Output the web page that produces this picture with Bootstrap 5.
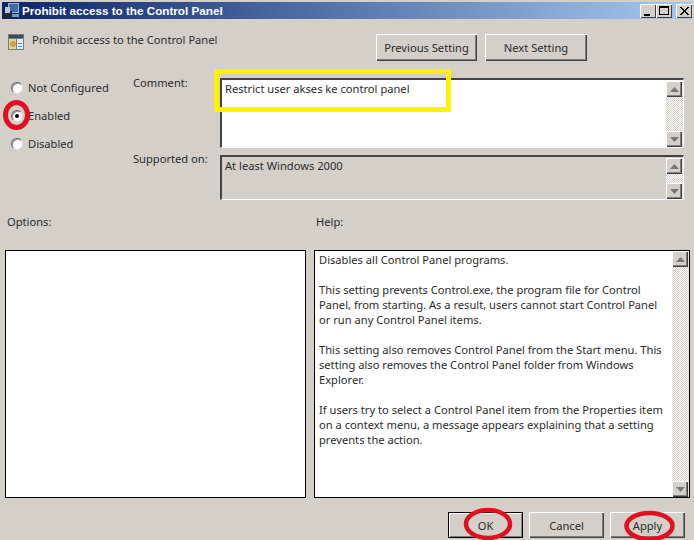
<!DOCTYPE html>
<html lang="en"><head><meta charset="utf-8"><title>Prohibit access to the Control Panel</title>
<link href="https://cdn.jsdelivr.net/npm/bootstrap@5.3.0/dist/css/bootstrap.min.css" rel="stylesheet">
<style>
html,body{height:100%}
body{margin:0;background:#d4d0c8;color:#2a2a2a;font:11.15px/13px "Noto Sans","Open Sans",sans-serif;overflow:hidden}
.dlg{position:relative;width:694px;height:540px;overflow:hidden}
.ttl{height:17px;margin:2px 2px 0 2px;padding:0;background:linear-gradient(90deg,#0a246a,#a6caf0);color:#fff;font:bold 11.7px/17px "Liberation Sans",sans-serif}
.ttl>svg{margin:0 2px}
.wbtn{width:16px;height:14px;background:#d4d0c8;box-shadow:inset 1px 1px #fff,inset -1px -1px #404040;color:#000}
.wbtn svg{display:block}
.wbtn-gap{margin-right:2px}
.hdr{padding:15px 107px 0 8px;height:59px}
.hdr-t{margin:-1px 0 0 8px}
.w98{background:#d4d0c8;border:0;padding:0;color:#2a2a2a;font:inherit;box-shadow:inset 1px 1px #fff,inset -1px -1px #404040,inset -2px -2px #808080}
.nav-b{width:102px;height:27px}
.nav-b.first-b{width:101px}
.top{height:122px}
.radios{width:133px;padding:0 0 0 11px;margin-top:-5px}
.rad{height:28px;gap:5px}
.rdo{width:12px;height:12px;border-radius:50%;background:#fff;border:1px solid;border-color:#666 #ddd #ddd #666;box-shadow:inset 1px 1px #999;flex:none;display:flex;align-items:center;justify-content:center}
.rdo i{display:block;width:4px;height:4px;border-radius:50%;background:#000}
.rad span{margin-top:1px}
.lbls{width:87px}
.l1{height:76px;margin-top:-2px}
.l2{height:40px}
.sunk{border:1px solid;border-color:#444 #fff #fff #444;border-top-width:2px;border-left-width:2px;padding:2px 0 0 3px}
.cmt{width:464px;height:70px;background:#fff}
.sup{width:464px;height:45px;margin-top:7px}
.sb{width:17px;background:repeating-conic-gradient(#d4d0c8 0 25%,#fff 0 50%) 0 0/2px 2px;flex:none;margin-top:-1px}
.ab{width:16px;height:16px;background:#d4d0c8;box-shadow:inset 1px 1px #fff,inset -1px -1px #404040,inset -2px -2px #808080;display:flex;align-items:center;justify-content:center}
.body-txt{flex:1;min-width:0}
.opt-lbl{height:50px;padding:15px 0 0 7px}
.opt-lbl span:first-child{width:309px}
.panes{height:248px;padding-left:5px;gap:8px}
.pane{background:#fff;border:1px solid #000;height:248px}
.p1{width:301px}
.p2{width:376px;padding:1px 0 0 4px}
.p2 p{margin:0 0 15px;line-height:15px;width:352px}
.foot{padding:14px 0 0 448px;gap:6px}
.foot .w98{width:75px;height:26px}
.foot .ok{box-shadow:inset 0 0 0 1px #000,inset 2px 2px #fff,inset -2px -2px #808080}
.marks{position:absolute;left:0;top:0;pointer-events:none}
</style></head><body>
<div class="dlg">
 <div class="ttl d-flex align-items-center">
  <svg width="16" height="16" viewBox="0 0 16 16"><rect x="4.500" y="0.500" width="10" height="9" fill="#3a6ea5" stroke="#9fb4cf"/><rect x="0" y="8" width="8" height="7" fill="#1c2c3c"/><rect x="1" y="4" width="5" height="6" fill="#b8c8cc"/><rect x="8" y="11" width="7" height="3" fill="#7f95b0"/></svg>
  <span class="flex-grow-1">Prohibit access to the Control Panel</span>
  <div class="wbtn"><svg width="16" height="14"><rect x="4" y="10" width="6" height="2" fill="#000"/></svg></div>
  <div class="wbtn"><svg width="16" height="14"><rect x="3.500" y="2.500" width="9" height="8" fill="none" stroke="#000"/><rect x="3" y="2" width="10" height="2" fill="#000"/></svg></div>
  <div class="wbtn ms-1"><svg width="16" height="14"><path d="M4 3l8 8M5 3l8 8M12 3l-8 8M13 3l-8 8" stroke="#000" fill="none"/></svg></div>
 </div>
 <div class="hdr d-flex">
  <svg width="16" height="16" viewBox="0 0 16 16"><rect x="0" y="0" width="16" height="16" fill="#6f7f7a"/><rect x="1" y="1" width="14" height="3" fill="#3a4a60"/><rect x="1" y="5" width="7" height="10" fill="#e8d48a"/><rect x="9" y="5" width="6" height="10" fill="#eef2f2"/><circle cx="5" cy="10" r="3" fill="#c9a24a"/><rect x="10" y="9" width="4" height="1" fill="#38f"/><rect x="10" y="12" width="4" height="1" fill="#38f"/></svg>
  <span class="hdr-t flex-grow-1">Prohibit access to the Control Panel</span>
  <div class="d-flex align-items-start"><button class="w98 nav-b first-b me-2">Previous Setting</button><button class="w98 nav-b">Next Setting</button></div>
 </div>
 <div class="top d-flex">
  <div class="radios">
   <div class="rad d-flex align-items-center"><span class="rdo"></span><span>Not Configured</span></div>
   <div class="rad d-flex align-items-center"><span class="rdo"><i></i></span><span>Enabled</span></div>
   <div class="rad d-flex align-items-center"><span class="rdo"></span><span>Disabled</span></div>
  </div>
  <div class="lbls"><div class="l1">Comment:</div><div class="l2">Supported on:</div></div>
  <div>
   <div class="cmt sunk d-flex"><div class="body-txt">Restrict user akses ke control panel</div>
    <div class="sb d-flex flex-column justify-content-between">
     <div class="ab"><svg width="9" height="5"><path d="M4.500 0l4.500 5H0z" fill="#777"/></svg></div>
     <div class="ab"><svg width="9" height="5"><path d="M4.500 5l4.500-5H0z" fill="#777"/></svg></div></div></div>
   <div class="sup sunk d-flex"><div class="body-txt">At least Windows 2000</div>
    <div class="sb d-flex flex-column justify-content-between">
     <div class="ab"><svg width="9" height="5"><path d="M4.500 0l4.500 5H0z" fill="#777"/></svg></div>
     <div class="ab"><svg width="9" height="5"><path d="M4.500 5l4.500-5H0z" fill="#777"/></svg></div></div></div>
  </div>
 </div>
 <div class="opt-lbl d-flex"><span>Options:</span><span>Help:</span></div>
 <div class="panes d-flex">
  <div class="pane p1"></div>
  <div class="pane p2 d-flex">
   <div class="body-txt">
    <p>Disables all Control Panel programs.</p>
    <p>This setting prevents Control.exe, the program file for Control Panel, from starting. As a result, users cannot start Control Panel or run any Control Panel items.</p>
    <p>This setting also removes Control Panel from the Start menu. This setting also removes the Control Panel folder from Windows Explorer.</p>
    <p>If users try to select a Control Panel item from the Properties item on a context menu, a message appears explaining that a setting prevents the action.</p>
   </div>
   <div class="sb d-flex flex-column justify-content-between">
     <div class="ab"><svg width="9" height="5"><path d="M4.500 0l4.500 5H0z" fill="#777"/></svg></div>
     <div class="ab"><svg width="9" height="5"><path d="M4.500 5l4.500-5H0z" fill="#777"/></svg></div></div>
  </div>
 </div>
 <div class="foot d-flex"><button class="w98 ok">OK</button><button class="w98">Cancel</button><button class="w98">Apply</button></div>
 <svg class="marks" width="694" height="540" fill="none">
  <rect x="216.500" y="71.500" width="232" height="38" stroke="#fff200" stroke-width="5"/>
  <ellipse cx="16.500" cy="115" rx="11" ry="12.500" stroke="#e0101f" stroke-width="5"/>
  <ellipse cx="488" cy="524" rx="22" ry="14" stroke="#e0101f" stroke-width="4.500"/>
  <ellipse cx="649.500" cy="526" rx="23" ry="13" stroke="#e0101f" stroke-width="4.500"/>
 </svg>
</div>
</body></html>
